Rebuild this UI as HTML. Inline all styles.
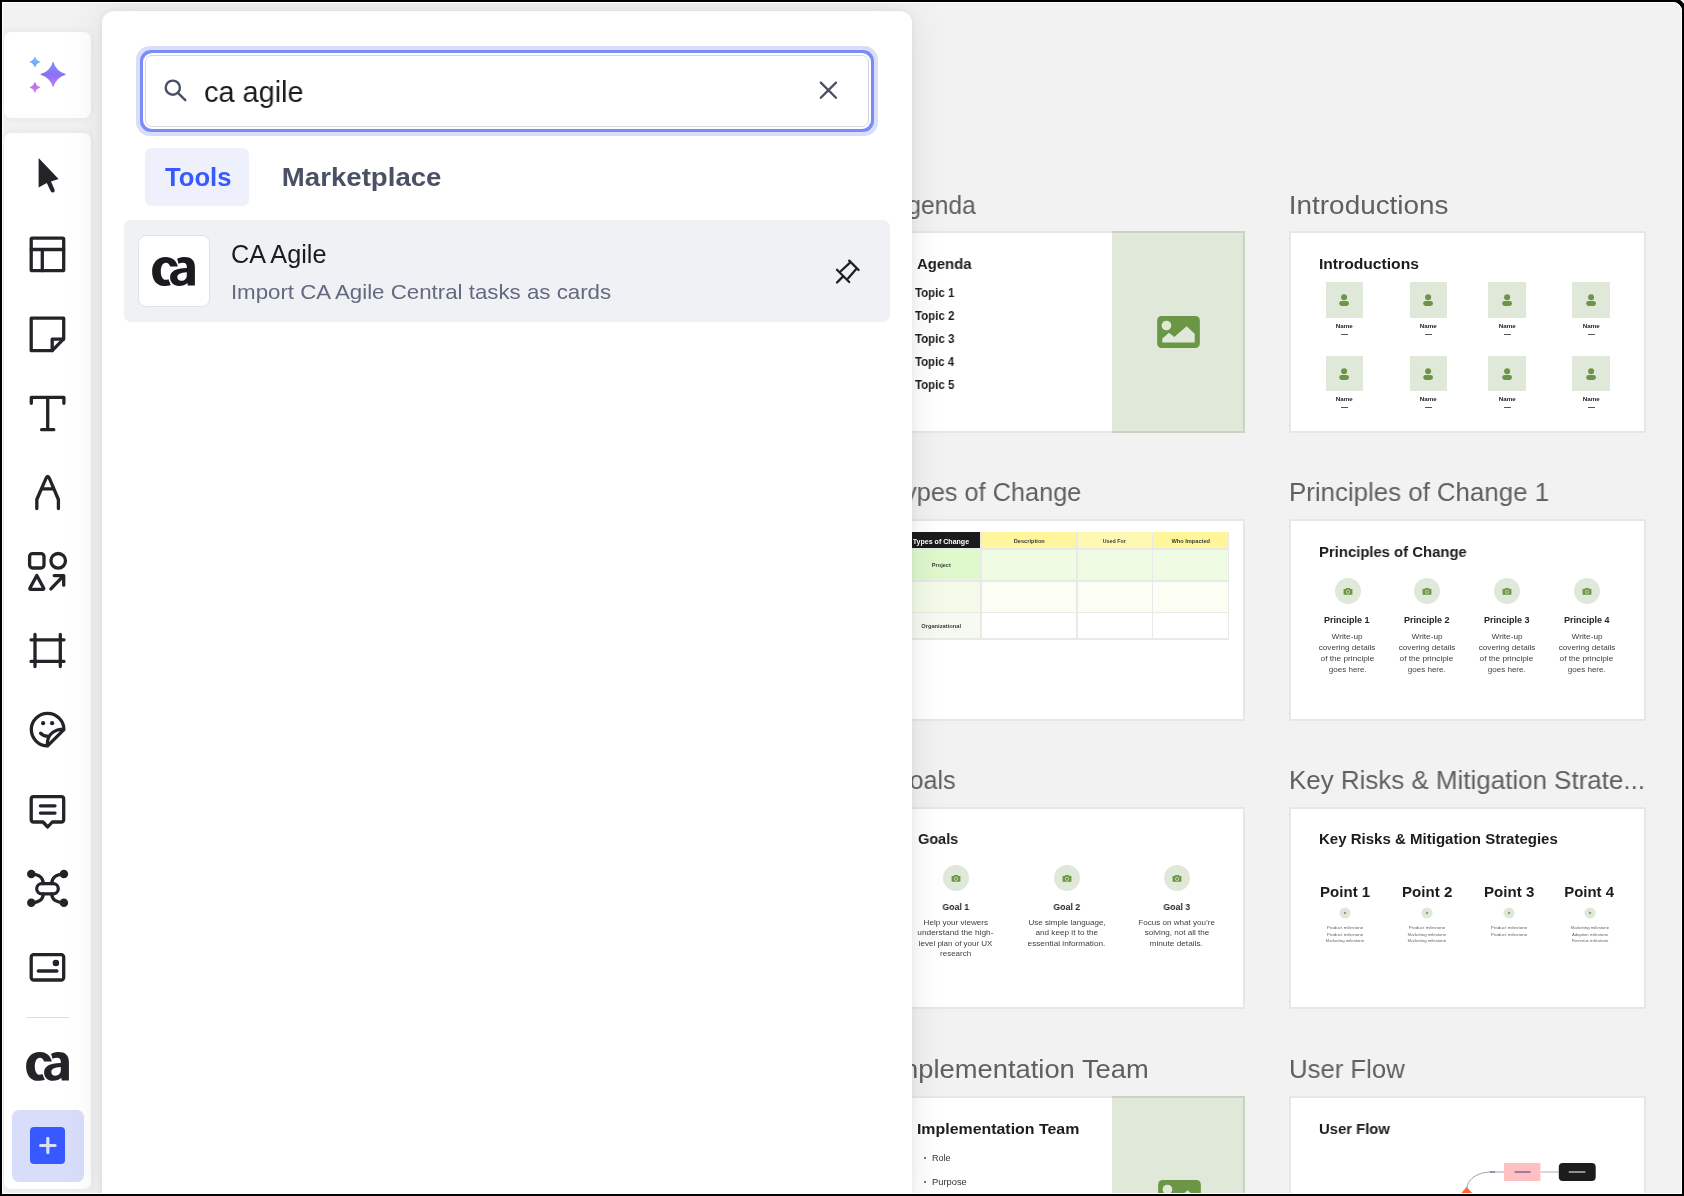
<!DOCTYPE html>
<html><head><meta charset="utf-8">
<style>
html,body{margin:0;padding:0;}
body{width:1684px;height:1196px;position:relative;overflow:hidden;background:#f2f2f2;font-family:"Liberation Sans",sans-serif;}
.t{position:absolute;white-space:nowrap;line-height:1;will-change:transform;}
.r{position:absolute;box-sizing:content-box;}
.sb{position:absolute;background:#fff;border-radius:7px;box-shadow:0 0 10px rgba(34,36,50,0.07);}
.panel{position:absolute;background:#fff;border-radius:12px;box-shadow:0 0 8px rgba(34,36,50,0.07),0 0 40px rgba(34,36,50,0.09);}
svg{position:absolute;overflow:visible;}
#inner{position:absolute;left:2px;top:2px;width:1678px;height:1190px;border:1px solid #fff;border-top-right-radius:9px;box-shadow:0 0 0 4px #000;}
</style></head><body>
<div id="canvas">
<div class="t" style="left:890.73px;top:191.69px;font-size:26px;font-weight:400;color:#606060;transform:scaleX(0.9449);transform-origin:0.07px 0;">Agenda</div>
<div class="t" style="left:1288.50px;top:191.69px;font-size:26px;font-weight:400;color:#606060;transform:scaleX(1.0726);transform-origin:2.40px 0;">Introductions</div>
<div class="t" style="left:890.21px;top:478.99px;font-size:26px;font-weight:400;color:#606060;transform:scaleX(0.9730);transform-origin:0.58px 0;">Types of Change</div>
<div class="t" style="left:1288.76px;top:478.99px;font-size:26px;font-weight:400;color:#606060;transform:scaleX(0.9939);transform-origin:2.15px 0;">Principles of Change 1</div>
<div class="t" style="left:889.50px;top:766.59px;font-size:26px;font-weight:400;color:#606060;transform:scaleX(0.9633);transform-origin:1.30px 0;">Goals</div>
<div class="t" style="left:1288.76px;top:766.59px;font-size:26px;font-weight:400;color:#606060;transform:scaleX(0.9974);transform-origin:2.15px 0;">Key Risks &amp; Mitigation Strate...</div>
<div class="t" style="left:888.39px;top:1055.99px;font-size:26px;font-weight:400;color:#606060;transform:scaleX(1.0516);transform-origin:2.40px 0;">Implementation Team</div>
<div class="t" style="left:1288.88px;top:1055.99px;font-size:26px;font-weight:400;color:#606060;transform:scaleX(0.9891);transform-origin:2.02px 0;">User Flow</div>
<div class="r" style="left:888px;top:231px;width:357px;height:201.5px;background:#fff;"></div>
<div class="r" style="left:888px;top:519px;width:357px;height:201.5px;background:#fff;"></div>
<div class="r" style="left:888px;top:807px;width:357px;height:201.5px;background:#fff;"></div>
<div class="r" style="left:888px;top:1096px;width:357px;height:201.5px;background:#fff;"></div>
<div class="r" style="left:1289px;top:231px;width:357px;height:201.5px;background:#fff;"></div>
<div class="r" style="left:1289px;top:519px;width:357px;height:201.5px;background:#fff;"></div>
<div class="r" style="left:1289px;top:807px;width:357px;height:201.5px;background:#fff;"></div>
<div class="r" style="left:1289px;top:1096px;width:357px;height:201.5px;background:#fff;"></div>
<div class="r" style="left:1112px;top:231px;width:132.5px;height:201.5px;background:#e0e8d9;"></div>
<div class="t" style="left:917.23px;top:256.40px;font-size:15px;font-weight:700;color:#1c1c1c;transform:scaleX(0.9906);transform-origin:0.38px 0;">Agenda</div>
<div class="t" style="left:915.17px;top:286.82px;font-size:12.5px;font-weight:700;color:#1c1c1c;transform:scaleX(0.9163);transform-origin:0.12px 0;">Topic 1</div>
<div class="t" style="left:915.17px;top:309.82px;font-size:12.5px;font-weight:700;color:#1c1c1c;transform:scaleX(0.9190);transform-origin:0.12px 0;">Topic 2</div>
<div class="t" style="left:915.17px;top:332.82px;font-size:12.5px;font-weight:700;color:#1c1c1c;transform:scaleX(0.9183);transform-origin:0.12px 0;">Topic 3</div>
<div class="t" style="left:915.17px;top:355.82px;font-size:12.5px;font-weight:700;color:#1c1c1c;transform:scaleX(0.9103);transform-origin:0.12px 0;">Topic 4</div>
<div class="t" style="left:915.17px;top:378.82px;font-size:12.5px;font-weight:700;color:#1c1c1c;transform:scaleX(0.9163);transform-origin:0.12px 0;">Topic 5</div>
<svg style="left:1156.9px;top:315.8px" width="43" height="32" viewBox="0 0 42.3 31.7"><rect x="0" y="0" width="42.3" height="31.7" rx="4.5" fill="#6b9646"/><path d="M5.1,22.3 L11.7,16.6 L17,20.9 L29.2,10.1 L37.2,17.5 L37.2,26.2 L5.1,26.2 Z" fill="#e0e8d9"/><circle cx="9.2" cy="9.4" r="4.8" fill="#e0e8d9"/></svg>
<div class="t" style="left:1318.89px;top:256.30px;font-size:15px;font-weight:700;color:#1c1c1c;transform:scaleX(1.0435);transform-origin:1.01px 0;">Introductions</div>
<div class="r" style="left:1325.5px;top:282px;width:37.6px;height:35.7px;background:#e0e8d9;"></div>
<svg style="left:1338.3px;top:293px" width="12" height="14" viewBox="0 0 12 14"><circle cx="6.1" cy="4.3" r="3" fill="#6b9646"/><rect x="1.2" y="8.1" width="9.8" height="4.9" rx="2.45" fill="#6b9646"/></svg>
<div class="t" style="left:1336.03px;top:322.62px;font-size:6px;font-weight:700;color:#222;transform:scaleX(1.0359);transform-origin:8.27px 0;">Name</div>
<div class="r" style="left:1340.8px;top:333.6px;width:7px;height:1px;background:#555;"></div>
<div class="r" style="left:1409.5px;top:282px;width:37.6px;height:35.7px;background:#e0e8d9;"></div>
<svg style="left:1422.3px;top:293px" width="12" height="14" viewBox="0 0 12 14"><circle cx="6.1" cy="4.3" r="3" fill="#6b9646"/><rect x="1.2" y="8.1" width="9.8" height="4.9" rx="2.45" fill="#6b9646"/></svg>
<div class="t" style="left:1420.03px;top:322.62px;font-size:6px;font-weight:700;color:#222;transform:scaleX(1.0359);transform-origin:8.27px 0;">Name</div>
<div class="r" style="left:1424.8px;top:333.6px;width:7px;height:1px;background:#555;"></div>
<div class="r" style="left:1488.3px;top:282px;width:37.6px;height:35.7px;background:#e0e8d9;"></div>
<svg style="left:1501.1px;top:293px" width="12" height="14" viewBox="0 0 12 14"><circle cx="6.1" cy="4.3" r="3" fill="#6b9646"/><rect x="1.2" y="8.1" width="9.8" height="4.9" rx="2.45" fill="#6b9646"/></svg>
<div class="t" style="left:1498.83px;top:322.62px;font-size:6px;font-weight:700;color:#222;transform:scaleX(1.0359);transform-origin:8.27px 0;">Name</div>
<div class="r" style="left:1503.6px;top:333.6px;width:7px;height:1px;background:#555;"></div>
<div class="r" style="left:1572.4px;top:282px;width:37.6px;height:35.7px;background:#e0e8d9;"></div>
<svg style="left:1585.2px;top:293px" width="12" height="14" viewBox="0 0 12 14"><circle cx="6.1" cy="4.3" r="3" fill="#6b9646"/><rect x="1.2" y="8.1" width="9.8" height="4.9" rx="2.45" fill="#6b9646"/></svg>
<div class="t" style="left:1582.93px;top:322.62px;font-size:6px;font-weight:700;color:#222;transform:scaleX(1.0359);transform-origin:8.27px 0;">Name</div>
<div class="r" style="left:1587.7px;top:333.6px;width:7px;height:1px;background:#555;"></div>
<div class="r" style="left:1325.5px;top:355.8px;width:37.6px;height:35.7px;background:#e0e8d9;"></div>
<svg style="left:1338.3px;top:366.8px" width="12" height="14" viewBox="0 0 12 14"><circle cx="6.1" cy="4.3" r="3" fill="#6b9646"/><rect x="1.2" y="8.1" width="9.8" height="4.9" rx="2.45" fill="#6b9646"/></svg>
<div class="t" style="left:1336.03px;top:396.42px;font-size:6px;font-weight:700;color:#222;transform:scaleX(1.0359);transform-origin:8.27px 0;">Name</div>
<div class="r" style="left:1340.8px;top:407.40000000000003px;width:7px;height:1px;background:#555;"></div>
<div class="r" style="left:1409.5px;top:355.8px;width:37.6px;height:35.7px;background:#e0e8d9;"></div>
<svg style="left:1422.3px;top:366.8px" width="12" height="14" viewBox="0 0 12 14"><circle cx="6.1" cy="4.3" r="3" fill="#6b9646"/><rect x="1.2" y="8.1" width="9.8" height="4.9" rx="2.45" fill="#6b9646"/></svg>
<div class="t" style="left:1420.03px;top:396.42px;font-size:6px;font-weight:700;color:#222;transform:scaleX(1.0359);transform-origin:8.27px 0;">Name</div>
<div class="r" style="left:1424.8px;top:407.40000000000003px;width:7px;height:1px;background:#555;"></div>
<div class="r" style="left:1488.3px;top:355.8px;width:37.6px;height:35.7px;background:#e0e8d9;"></div>
<svg style="left:1501.1px;top:366.8px" width="12" height="14" viewBox="0 0 12 14"><circle cx="6.1" cy="4.3" r="3" fill="#6b9646"/><rect x="1.2" y="8.1" width="9.8" height="4.9" rx="2.45" fill="#6b9646"/></svg>
<div class="t" style="left:1498.83px;top:396.42px;font-size:6px;font-weight:700;color:#222;transform:scaleX(1.0359);transform-origin:8.27px 0;">Name</div>
<div class="r" style="left:1503.6px;top:407.40000000000003px;width:7px;height:1px;background:#555;"></div>
<div class="r" style="left:1572.4px;top:355.8px;width:37.6px;height:35.7px;background:#e0e8d9;"></div>
<svg style="left:1585.2px;top:366.8px" width="12" height="14" viewBox="0 0 12 14"><circle cx="6.1" cy="4.3" r="3" fill="#6b9646"/><rect x="1.2" y="8.1" width="9.8" height="4.9" rx="2.45" fill="#6b9646"/></svg>
<div class="t" style="left:1582.93px;top:396.42px;font-size:6px;font-weight:700;color:#222;transform:scaleX(1.0359);transform-origin:8.27px 0;">Name</div>
<div class="r" style="left:1587.7px;top:407.40000000000003px;width:7px;height:1px;background:#555;"></div>
<div class="r" style="left:902px;top:531.5px;width:326.79999999999995px;height:108px;background:#e9e9e9;"></div>
<div class="r" style="left:902px;top:532.2px;width:78px;height:15.7px;background:#1b1b1b;"></div>
<div class="r" style="left:981.7px;top:532.2px;width:94.3px;height:15.7px;background:#fff59d;"></div>
<div class="r" style="left:1077.6px;top:532.2px;width:74.1px;height:15.7px;background:#fef9b2;"></div>
<div class="r" style="left:1153.3px;top:532.2px;width:74.3px;height:15.7px;background:#fff59a;"></div>
<div class="r" style="left:902px;top:549.6px;width:78px;height:30.1px;background:#dff9cc;"></div>
<div class="r" style="left:981.7px;top:549.6px;width:94.3px;height:30.1px;background:#effbe3;"></div>
<div class="r" style="left:1077.6px;top:549.6px;width:74.1px;height:30.1px;background:#effbe3;"></div>
<div class="r" style="left:1153.3px;top:549.6px;width:74.3px;height:30.1px;background:#effbe3;"></div>
<div class="r" style="left:902px;top:581.5px;width:78px;height:30.3px;background:#f3fbe8;"></div>
<div class="r" style="left:981.7px;top:581.5px;width:94.3px;height:30.3px;background:#fcfdf3;"></div>
<div class="r" style="left:1077.6px;top:581.5px;width:74.1px;height:30.3px;background:#fcfdf3;"></div>
<div class="r" style="left:1153.3px;top:581.5px;width:74.3px;height:30.3px;background:#fcfdf3;"></div>
<div class="r" style="left:902px;top:613.3px;width:78px;height:24.5px;background:#f5fbf1;"></div>
<div class="r" style="left:981.7px;top:613.3px;width:94.3px;height:24.5px;background:#ffffff;"></div>
<div class="r" style="left:1077.6px;top:613.3px;width:74.1px;height:24.5px;background:#ffffff;"></div>
<div class="r" style="left:1153.3px;top:613.3px;width:74.3px;height:24.5px;background:#ffffff;"></div>
<div class="t" style="left:913.14px;top:538.07px;font-size:7px;font-weight:700;color:#fff;transform:scaleX(1.0076);transform-origin:27.86px 0;">Types of Change</div>
<div class="t" style="left:1014.53px;top:539.00px;font-size:5.2px;font-weight:700;color:#3c3c30;transform:scaleX(1.0882);transform-origin:14.32px 0;">Description</div>
<div class="t" style="left:1103.26px;top:539.00px;font-size:5.2px;font-weight:700;color:#3c3c30;transform:scaleX(1.0202);transform-origin:11.39px 0;">Used For</div>
<div class="t" style="left:1172.85px;top:539.00px;font-size:5.2px;font-weight:700;color:#3c3c30;transform:scaleX(1.0912);transform-origin:17.60px 0;">Who Impacted</div>
<div class="t" style="left:931.83px;top:562.74px;font-size:5.5px;font-weight:700;color:#3a3a3a;transform:scaleX(1.0162);transform-origin:9.47px 0;">Project</div>
<div class="t" style="left:921.88px;top:623.94px;font-size:5.5px;font-weight:700;color:#3a3a3a;transform:scaleX(1.0428);transform-origin:19.02px 0;">Organizational</div>
<div class="t" style="left:1318.89px;top:544.40px;font-size:15px;font-weight:700;color:#1c1c1c;transform:scaleX(0.9900);transform-origin:1.01px 0;">Principles of Change</div>
<svg style="left:1334.8000000000002px;top:577.6px" width="26" height="26" viewBox="0 0 26 26"><circle cx="13" cy="13" r="13" fill="#e0e8d9"/><path d="M8.6,11 h2 l0.8,-1 h3.2 l0.8,1 h2 v5.8 h-8.8 z" fill="#6b9646"/><circle cx="13" cy="13.8" r="1.7" fill="none" stroke="#c9dbb9" stroke-width="0.9"/></svg>
<div class="t" style="left:1324.46px;top:615.58px;font-size:9px;font-weight:700;color:#222;">Principle 1</div>
<div class="t" style="left:1333.43px;top:633.15px;font-size:7.5px;font-weight:400;color:#3f3f3f;transform:scaleX(1.1018);transform-origin:13.97px 0;">Write-up</div>
<div class="t" style="left:1321.32px;top:644.05px;font-size:7.5px;font-weight:400;color:#3f3f3f;transform:scaleX(1.0869);transform-origin:26.08px 0;">covering details</div>
<div class="t" style="left:1323.02px;top:654.95px;font-size:7.5px;font-weight:400;color:#3f3f3f;transform:scaleX(1.1012);transform-origin:24.38px 0;">of the principle</div>
<div class="t" style="left:1329.86px;top:665.85px;font-size:7.5px;font-weight:400;color:#3f3f3f;transform:scaleX(1.0742);transform-origin:17.54px 0;">goes here.</div>
<svg style="left:1414.2px;top:577.6px" width="26" height="26" viewBox="0 0 26 26"><circle cx="13" cy="13" r="13" fill="#e0e8d9"/><path d="M8.6,11 h2 l0.8,-1 h3.2 l0.8,1 h2 v5.8 h-8.8 z" fill="#6b9646"/><circle cx="13" cy="13.8" r="1.7" fill="none" stroke="#c9dbb9" stroke-width="0.9"/></svg>
<div class="t" style="left:1403.91px;top:615.58px;font-size:9px;font-weight:700;color:#222;transform:scaleX(1.0029);transform-origin:22.89px 0;">Principle 2</div>
<div class="t" style="left:1412.83px;top:633.15px;font-size:7.5px;font-weight:400;color:#3f3f3f;transform:scaleX(1.1018);transform-origin:13.97px 0;">Write-up</div>
<div class="t" style="left:1400.72px;top:644.05px;font-size:7.5px;font-weight:400;color:#3f3f3f;transform:scaleX(1.0869);transform-origin:26.08px 0;">covering details</div>
<div class="t" style="left:1402.42px;top:654.95px;font-size:7.5px;font-weight:400;color:#3f3f3f;transform:scaleX(1.1012);transform-origin:24.38px 0;">of the principle</div>
<div class="t" style="left:1409.26px;top:665.85px;font-size:7.5px;font-weight:400;color:#3f3f3f;transform:scaleX(1.0742);transform-origin:17.54px 0;">goes here.</div>
<svg style="left:1494.1000000000001px;top:577.6px" width="26" height="26" viewBox="0 0 26 26"><circle cx="13" cy="13" r="13" fill="#e0e8d9"/><path d="M8.6,11 h2 l0.8,-1 h3.2 l0.8,1 h2 v5.8 h-8.8 z" fill="#6b9646"/><circle cx="13" cy="13.8" r="1.7" fill="none" stroke="#c9dbb9" stroke-width="0.9"/></svg>
<div class="t" style="left:1483.80px;top:615.58px;font-size:9px;font-weight:700;color:#222;transform:scaleX(1.0024);transform-origin:22.91px 0;">Principle 3</div>
<div class="t" style="left:1492.73px;top:633.15px;font-size:7.5px;font-weight:400;color:#3f3f3f;transform:scaleX(1.1018);transform-origin:13.97px 0;">Write-up</div>
<div class="t" style="left:1480.62px;top:644.05px;font-size:7.5px;font-weight:400;color:#3f3f3f;transform:scaleX(1.0869);transform-origin:26.08px 0;">covering details</div>
<div class="t" style="left:1482.32px;top:654.95px;font-size:7.5px;font-weight:400;color:#3f3f3f;transform:scaleX(1.1012);transform-origin:24.38px 0;">of the principle</div>
<div class="t" style="left:1489.16px;top:665.85px;font-size:7.5px;font-weight:400;color:#3f3f3f;transform:scaleX(1.0742);transform-origin:17.54px 0;">goes here.</div>
<svg style="left:1574.0px;top:577.6px" width="26" height="26" viewBox="0 0 26 26"><circle cx="13" cy="13" r="13" fill="#e0e8d9"/><path d="M8.6,11 h2 l0.8,-1 h3.2 l0.8,1 h2 v5.8 h-8.8 z" fill="#6b9646"/><circle cx="13" cy="13.8" r="1.7" fill="none" stroke="#c9dbb9" stroke-width="0.9"/></svg>
<div class="t" style="left:1563.56px;top:615.58px;font-size:9px;font-weight:700;color:#222;transform:scaleX(0.9963);transform-origin:23.04px 0;">Principle 4</div>
<div class="t" style="left:1572.63px;top:633.15px;font-size:7.5px;font-weight:400;color:#3f3f3f;transform:scaleX(1.1018);transform-origin:13.97px 0;">Write-up</div>
<div class="t" style="left:1560.52px;top:644.05px;font-size:7.5px;font-weight:400;color:#3f3f3f;transform:scaleX(1.0869);transform-origin:26.08px 0;">covering details</div>
<div class="t" style="left:1562.22px;top:654.95px;font-size:7.5px;font-weight:400;color:#3f3f3f;transform:scaleX(1.1012);transform-origin:24.38px 0;">of the principle</div>
<div class="t" style="left:1569.06px;top:665.85px;font-size:7.5px;font-weight:400;color:#3f3f3f;transform:scaleX(1.0742);transform-origin:17.54px 0;">goes here.</div>
<div class="t" style="left:917.90px;top:831.00px;font-size:15px;font-weight:700;color:#1c1c1c;transform:scaleX(0.9639);transform-origin:0.60px 0;">Goals</div>
<svg style="left:943.1px;top:865.1px" width="26" height="26" viewBox="0 0 26 26"><circle cx="13" cy="13" r="13" fill="#e0e8d9"/><path d="M8.6,11 h2 l0.8,-1 h3.2 l0.8,1 h2 v5.8 h-8.8 z" fill="#6b9646"/><circle cx="13" cy="13.8" r="1.7" fill="none" stroke="#c9dbb9" stroke-width="0.9"/></svg>
<div class="t" style="left:941.90px;top:903.08px;font-size:9px;font-weight:700;color:#222;transform:scaleX(0.9670);transform-origin:13.80px 0;">Goal 1</div>
<div class="t" style="left:925.72px;top:918.55px;font-size:7.5px;font-weight:400;color:#3f3f3f;transform:scaleX(1.0813);transform-origin:29.98px 0;">Help your viewers</div>
<div class="t" style="left:921.22px;top:929.15px;font-size:7.5px;font-weight:400;color:#3f3f3f;transform:scaleX(1.1061);transform-origin:34.48px 0;">understand the high-</div>
<div class="t" style="left:920.93px;top:939.75px;font-size:7.5px;font-weight:400;color:#3f3f3f;transform:scaleX(1.0652);transform-origin:34.77px 0;">level plan of your UX</div>
<div class="t" style="left:941.10px;top:950.35px;font-size:7.5px;font-weight:400;color:#3f3f3f;transform:scaleX(1.0631);transform-origin:14.60px 0;">research</div>
<svg style="left:1054.0px;top:865.1px" width="26" height="26" viewBox="0 0 26 26"><circle cx="13" cy="13" r="13" fill="#e0e8d9"/><path d="M8.6,11 h2 l0.8,-1 h3.2 l0.8,1 h2 v5.8 h-8.8 z" fill="#6b9646"/><circle cx="13" cy="13.8" r="1.7" fill="none" stroke="#c9dbb9" stroke-width="0.9"/></svg>
<div class="t" style="left:1052.84px;top:903.08px;font-size:9px;font-weight:700;color:#222;transform:scaleX(0.9702);transform-origin:13.76px 0;">Goal 2</div>
<div class="t" style="left:1030.58px;top:918.55px;font-size:7.5px;font-weight:400;color:#3f3f3f;transform:scaleX(1.0723);transform-origin:36.02px 0;">Use simple language,</div>
<div class="t" style="left:1037.83px;top:929.15px;font-size:7.5px;font-weight:400;color:#3f3f3f;transform:scaleX(1.0895);transform-origin:28.77px 0;">and keep it to the</div>
<div class="t" style="left:1031.34px;top:939.75px;font-size:7.5px;font-weight:400;color:#3f3f3f;transform:scaleX(1.0976);transform-origin:35.26px 0;">essential information.</div>
<svg style="left:1163.9px;top:865.1px" width="26" height="26" viewBox="0 0 26 26"><circle cx="13" cy="13" r="13" fill="#e0e8d9"/><path d="M8.6,11 h2 l0.8,-1 h3.2 l0.8,1 h2 v5.8 h-8.8 z" fill="#6b9646"/><circle cx="13" cy="13.8" r="1.7" fill="none" stroke="#c9dbb9" stroke-width="0.9"/></svg>
<div class="t" style="left:1162.73px;top:903.08px;font-size:9px;font-weight:700;color:#222;transform:scaleX(0.9694);transform-origin:13.77px 0;">Goal 3</div>
<div class="t" style="left:1140.71px;top:918.55px;font-size:7.5px;font-weight:400;color:#3f3f3f;transform:scaleX(1.0746);transform-origin:35.79px 0;">Focus on what you’re</div>
<div class="t" style="left:1146.54px;top:929.15px;font-size:7.5px;font-weight:400;color:#3f3f3f;transform:scaleX(1.0754);transform-origin:29.96px 0;">solving, not all the</div>
<div class="t" style="left:1152.41px;top:939.75px;font-size:7.5px;font-weight:400;color:#3f3f3f;transform:scaleX(1.1023);transform-origin:24.09px 0;">minute details.</div>
<div class="t" style="left:1318.89px;top:831.20px;font-size:15px;font-weight:700;color:#1c1c1c;transform:scaleX(1.0018);transform-origin:1.01px 0;">Key Risks &amp; Mitigation Strategies</div>
<div class="t" style="left:1320.55px;top:884.53px;font-size:14.5px;font-weight:700;color:#1c1c1c;transform:scaleX(1.0374);transform-origin:24.45px 0;">Point 1</div>
<svg style="left:1339px;top:906.7px" width="12" height="12"><circle cx="6" cy="6" r="5.6" fill="#e0e8d9"/><path d="M4.9,5.1 L7.1,6 L4.9,6.9" fill="none" stroke="#6b9646" stroke-width="0.9"/></svg>
<div class="t" style="left:1328.91px;top:926.41px;font-size:4px;font-weight:400;color:#666;transform:scaleX(1.1425);transform-origin:16.09px 0;">Product milestone</div>
<div class="t" style="left:1328.91px;top:932.81px;font-size:4px;font-weight:400;color:#666;transform:scaleX(1.1425);transform-origin:16.09px 0;">Product milestone</div>
<div class="t" style="left:1327.03px;top:939.21px;font-size:4px;font-weight:400;color:#666;transform:scaleX(1.0768);transform-origin:17.97px 0;">Marketing milestone</div>
<div class="t" style="left:1402.92px;top:884.53px;font-size:14.5px;font-weight:700;color:#1c1c1c;transform:scaleX(1.0406);transform-origin:24.38px 0;">Point 2</div>
<svg style="left:1421.3px;top:906.7px" width="12" height="12"><circle cx="6" cy="6" r="5.6" fill="#e0e8d9"/><path d="M4.9,5.1 L7.1,6 L4.9,6.9" fill="none" stroke="#6b9646" stroke-width="0.9"/></svg>
<div class="t" style="left:1411.21px;top:926.41px;font-size:4px;font-weight:400;color:#666;transform:scaleX(1.1425);transform-origin:16.09px 0;">Product milestone</div>
<div class="t" style="left:1409.33px;top:932.81px;font-size:4px;font-weight:400;color:#666;transform:scaleX(1.0768);transform-origin:17.97px 0;">Marketing milestone</div>
<div class="t" style="left:1409.33px;top:939.21px;font-size:4px;font-weight:400;color:#666;transform:scaleX(1.0768);transform-origin:17.97px 0;">Marketing milestone</div>
<div class="t" style="left:1484.50px;top:884.53px;font-size:14.5px;font-weight:700;color:#1c1c1c;transform:scaleX(1.0398);transform-origin:24.40px 0;">Point 3</div>
<svg style="left:1502.9px;top:906.7px" width="12" height="12"><circle cx="6" cy="6" r="5.6" fill="#e0e8d9"/><path d="M4.9,5.1 L7.1,6 L4.9,6.9" fill="none" stroke="#6b9646" stroke-width="0.9"/></svg>
<div class="t" style="left:1492.82px;top:926.41px;font-size:4px;font-weight:400;color:#666;transform:scaleX(1.1425);transform-origin:16.09px 0;">Product milestone</div>
<div class="t" style="left:1492.82px;top:932.81px;font-size:4px;font-weight:400;color:#666;transform:scaleX(1.1425);transform-origin:16.09px 0;">Product milestone</div>
<div class="t" style="left:1565.39px;top:884.53px;font-size:14.5px;font-weight:700;color:#1c1c1c;transform:scaleX(1.0303);transform-origin:24.61px 0;">Point 4</div>
<svg style="left:1584px;top:906.7px" width="12" height="12"><circle cx="6" cy="6" r="5.6" fill="#e0e8d9"/><path d="M4.9,5.1 L7.1,6 L4.9,6.9" fill="none" stroke="#6b9646" stroke-width="0.9"/></svg>
<div class="t" style="left:1572.03px;top:926.41px;font-size:4px;font-weight:400;color:#666;transform:scaleX(1.0768);transform-origin:17.97px 0;">Marketing milestone</div>
<div class="t" style="left:1573.07px;top:932.81px;font-size:4px;font-weight:400;color:#666;transform:scaleX(1.0638);transform-origin:16.93px 0;">Adoption milestone</div>
<div class="t" style="left:1572.80px;top:939.21px;font-size:4px;font-weight:400;color:#666;transform:scaleX(1.0670);transform-origin:17.20px 0;">Revenue milestone</div>
<div class="r" style="left:1112px;top:1096px;width:132.5px;height:110px;background:#e0e8d9;"></div>
<div class="t" style="left:917.19px;top:1120.90px;font-size:15px;font-weight:700;color:#1c1c1c;transform:scaleX(1.0604);transform-origin:1.01px 0;">Implementation Team</div>
<div class="r" style="left:924.3px;top:1157.3px;width:2px;height:2px;background:#444;border-radius:1px;"></div>
<div class="t" style="left:932.36px;top:1154.18px;font-size:9px;font-weight:400;color:#333;transform:scaleX(1.0075);transform-origin:0.74px 0;">Role</div>
<div class="r" style="left:924.3px;top:1181.3px;width:2px;height:2px;background:#444;border-radius:1px;"></div>
<div class="t" style="left:932.36px;top:1178.18px;font-size:9px;font-weight:400;color:#333;transform:scaleX(1.0378);transform-origin:0.74px 0;">Purpose</div>
<svg style="left:1157.6px;top:1180px" width="43" height="32" viewBox="0 0 42.3 31.7"><rect x="0" y="0" width="42.3" height="31.7" rx="4.5" fill="#6b9646"/><path d="M5.1,22.3 L11.7,16.6 L17,20.9 L29.2,10.1 L37.2,17.5 L37.2,26.2 L5.1,26.2 Z" fill="#e0e8d9"/><circle cx="9.2" cy="9.4" r="4.8" fill="#e0e8d9"/></svg>
<div class="t" style="left:1319.00px;top:1121.20px;font-size:15px;font-weight:700;color:#1c1c1c;transform:scaleX(0.9887);transform-origin:0.90px 0;">User Flow</div>
<svg style="left:0;top:0" width="1684" height="1196"><path d="M1466.7,1190 C1466.7,1180 1476,1172 1492,1172 L1504,1172" fill="none" stroke="#8a8a8a" stroke-width="0.8"/><line x1="1540.4" y1="1172" x2="1558.8" y2="1172" stroke="#9a9a9a" stroke-width="0.8"/><rect x="1504" y="1163" width="36.4" height="18" fill="#ffbfc3"/><line x1="1514.6" y1="1172" x2="1530.6" y2="1172" stroke="#6b5b8a" stroke-width="1.3"/><rect x="1558.8" y="1163" width="36.9" height="18" rx="4" fill="#1c1c1c"/><line x1="1568.7" y1="1172" x2="1585.4" y2="1172" stroke="#cfcfcf" stroke-width="1.3"/><path d="M1466.7,1187 L1473,1194 L1460.4,1194 Z" fill="#ff6633"/><line x1="1490" y1="1172" x2="1495" y2="1172" stroke="#7070b0" stroke-width="1.3"/></svg>
<div class="r" style="left:888px;top:231px;width:353px;height:197.5px;border:2px solid rgba(0,0,0,0.095);"></div>
<div class="r" style="left:888px;top:519px;width:353px;height:197.5px;border:2px solid rgba(0,0,0,0.095);"></div>
<div class="r" style="left:888px;top:807px;width:353px;height:197.5px;border:2px solid rgba(0,0,0,0.095);"></div>
<div class="r" style="left:888px;top:1096px;width:353px;height:197.5px;border:2px solid rgba(0,0,0,0.095);"></div>
<div class="r" style="left:1289px;top:231px;width:353px;height:197.5px;border:2px solid rgba(0,0,0,0.095);"></div>
<div class="r" style="left:1289px;top:519px;width:353px;height:197.5px;border:2px solid rgba(0,0,0,0.095);"></div>
<div class="r" style="left:1289px;top:807px;width:353px;height:197.5px;border:2px solid rgba(0,0,0,0.095);"></div>
<div class="r" style="left:1289px;top:1096px;width:353px;height:197.5px;border:2px solid rgba(0,0,0,0.095);"></div>
</div>
<div id="sidebar">
<div class="sb" style="left:4px;top:32px;width:87px;height:86px;"></div>
<div class="sb" style="left:4px;top:133px;width:87px;height:1055.5px;"></div>
<svg style="left:0;top:0" width="100" height="100"><defs>
<linearGradient id="gs1" x1="0" y1="56.5" x2="0" y2="67.2" gradientUnits="userSpaceOnUse"><stop offset="0" stop-color="#82c0ff"/><stop offset="1" stop-color="#6c9cfa"/></linearGradient>
<linearGradient id="gs2" x1="0" y1="62" x2="0" y2="87" gradientUnits="userSpaceOnUse"><stop offset="0" stop-color="#7c97fc"/><stop offset="0.5" stop-color="#8a70f6"/><stop offset="1" stop-color="#c77cf0"/></linearGradient>
<linearGradient id="gs3" x1="0" y1="82" x2="0" y2="93" gradientUnits="userSpaceOnUse"><stop offset="0" stop-color="#a76ff3"/><stop offset="1" stop-color="#d77fec"/></linearGradient></defs>
<path d="M53.1,62.50000000000001 C54.17,67.86 59.64,73.33 65.0,74.4 C59.64,75.47 54.17,80.95 53.1,86.30000000000001 C52.03,80.95 46.56,75.47 41.2,74.4 C46.56,73.33 52.03,67.86 53.1,62.50000000000001 Z" fill="url(#gs2)" stroke="url(#gs2)" stroke-width="1.2" stroke-linejoin="round"/>
<path d="M34.9,57.1 C35.33,59.26 37.54,61.47 39.699999999999996,61.9 C37.54,62.33 35.33,64.54 34.9,66.7 C34.47,64.54 32.26,62.33 30.099999999999998,61.9 C32.26,61.47 34.47,59.26 34.9,57.1 Z" fill="url(#gs1)" stroke="url(#gs1)" stroke-width="1" stroke-linejoin="round"/>
<path d="M34.9,82.60000000000001 C35.33,84.76 37.54,86.97 39.699999999999996,87.4 C37.54,87.83 35.33,90.04 34.9,92.2 C34.47,90.04 32.26,87.83 30.099999999999998,87.4 C32.26,86.97 34.47,84.76 34.9,82.60000000000001 Z" fill="url(#gs3)" stroke="url(#gs3)" stroke-width="1" stroke-linejoin="round"/>
</svg>
<svg style="left:0;top:0" width="100" height="1196" fill="none" stroke="#222428" stroke-width="3.3" stroke-linecap="round" stroke-linejoin="round">
<path d="M38.6,158.1 L58.6,178.9 L51,181.6 L54.6,189.7 Q55.3,191.8 53.3,192.4 Q51.4,193 50.6,191.1 L46.8,183.1 L38.6,187.6 Z" fill="#222428" stroke="none"/>
<rect x="31.2" y="238.2" width="32.5" height="32.5" rx="1"/><path d="M31.2,249.5 H63.7 M42.3,249.5 V270.7"/>
<path d="M31.2,318.2 H63.7 V338.8 L52.2,350.7 H31.2 Z"/><path d="M63.5,339.2 H52.2 V350.5"/>
<path d="M31.3,403.3 V397.3 H63.9 V403.3 M47.7,397.3 V429.7 M41.6,429.7 H53.8"/>
<path d="M36.8,508.5 V499.5 L46.1,478.2 Q47.7,474.8 49.3,478.2 L58.4,499.5 V508.5 M42,488.8 H53.5"/>
<rect x="29.6" y="553.6" width="14.4" height="14.4" rx="3"/><circle cx="58.2" cy="560.8" r="7.3"/><path d="M36.8,575.5 L30,588 Q29.3,589.4 31,589.4 H42.6 Q44.3,589.4 43.6,588 Z"/><path d="M50.9,588.9 L63.2,576.2 M54.2,575.6 H63.7 V585.2"/>
<path d="M35,634.5 V666.5 M60.3,634.5 V666.5 M31,639.8 H64 M31,661.4 H64"/>
<path d="M47.6,745.9 A16.3,16.3 0 1 1 63.9,729.6 L47.6,745.9 M63.7,729.2 C56,729.5 47.3,733 47.3,744.5"/><circle cx="43.1" cy="723.2" r="2.1" fill="#222428" stroke="none"/><circle cx="52.1" cy="723.2" r="2.1" fill="#222428" stroke="none"/><path d="M40.6,733.2 Q43.8,736.3 47.4,736.2"/>
<path d="M33.7,796.7 H61.2 Q63.7,796.7 63.7,799.2 V819.5 Q63.7,822 61.2,822 H52.3 L47.7,827 L43,822 H33.7 Q31.2,822 31.2,819.5 V799.2 Q31.2,796.7 33.7,796.7 Z"/><path d="M40.4,805.8 H55 M40.4,813.1 H55"/>
<rect x="36.7" y="883.7" width="21.6" height="10.1" rx="5.05" stroke-width="3.2"/><path d="M31.3,874.1 C38.5,874.1 43.3,877.2 43.3,883.7 M63.9,874.1 C56.7,874.1 51.7,877.2 51.7,883.7 M31.3,902.7 C38.5,902.7 43.3,899.8 43.3,893.8 M63.9,902.7 C56.7,902.7 51.7,899.8 51.7,893.8"/><circle cx="31.3" cy="874.1" r="2.6" fill="#222428"/><circle cx="63.9" cy="874.1" r="2.6" fill="#222428"/><circle cx="31.3" cy="902.7" r="2.6" fill="#222428"/><circle cx="63.9" cy="902.7" r="2.6" fill="#222428"/>
<rect x="31.2" y="954.7" width="32.5" height="25.3" rx="2.5"/><circle cx="55.9" cy="963.1" r="1.6" fill="#222428"/><path d="M38.3,971 H56.9"/>
</svg>
<div class="r" style="left:25.8px;top:1017px;width:43.1px;height:1px;background:#dcdee5;"></div>
<svg style="left:0;top:0" width="1684" height="1196"><g transform="translate(-126.00,794.90)" fill="#222428"><path d="M177.8,266.5 L170.1,266.5 C169.4,264.2 168,262.8 165.8,262.8 C162.6,262.8 160.8,266.3 160.8,271.5 C160.8,276.6 162.8,279.8 165.6,279.8 C166.6,279.8 167.6,279.6 168.4,279.2 L170.8,284.9 C169,285.6 166.6,285.9 163.8,285.9 C156.6,285.9 152.1,280 152.1,271.5 C152.1,263.1 157.4,257.1 165.8,257.1 C172,257.1 176.6,260.5 177.8,266.5 Z"/><path fill-rule="evenodd" stroke="#fff" stroke-width="1.1" paint-order="stroke" d="M177.1,258.8 C179.5,257.7 181.8,257.1 184.6,257.1 C191,257.1 194.9,260.2 194.9,267 L194.9,285.5 L187.8,285.5 L187.3,282.9 C185.5,284.9 182.5,285.9 178.9,285.9 C173.6,285.9 170.1,282.5 170.1,277.5 C170.1,271.4 175.3,268.3 186.8,268 L186.8,266.6 C186.8,264.1 185.5,262.8 183.1,262.8 C181.4,262.8 179.9,263.2 178.5,263.8 Z M186.8,272.2 C180.2,272.5 177.3,274.2 177.3,277.1 C177.3,279.4 178.8,280.8 181.3,280.8 C184.6,280.8 186.8,278.5 186.8,275.4 Z"/></g></svg>
<div class="r" style="left:12px;top:1110px;width:72px;height:72px;background:#d8ddfa;border-radius:7px;"></div>
<div class="r" style="left:29.7px;top:1127.4px;width:35.6px;height:36.2px;background:#3859ff;border-radius:4px;"></div>
<svg style="left:0;top:0" width="100" height="1196"><path d="M40.6,1145.5 H55.1 M47.85,1138.3 V1152.6" stroke="#d8ddfa" stroke-width="3.2" stroke-linecap="round"/></svg>
</div>
<div id="panel">
<div class="panel" style="left:102px;top:11px;width:810px;height:1200px;"></div>
<div class="r" style="left:136px;top:46px;width:742px;height:90px;border-radius:14px;background:#d9defb;"></div>
<div class="r" style="left:140px;top:50px;width:734px;height:82px;border-radius:11px;background:#7b8cfa;"></div>
<div class="r" style="left:143px;top:53px;width:728px;height:76px;border-radius:9px;background:#fff;"></div>
<div class="r" style="left:145px;top:55px;width:722px;height:70px;border-radius:7px;background:#fff;border:1px solid #d5d7de;"></div>
<svg style="left:0;top:0" width="1000" height="200" fill="none" stroke="#4a4f63" stroke-width="2.4" stroke-linecap="round"><circle cx="172.8" cy="87.7" r="7.1"/><path d="M178.2,93.1 L185.3,100.2"/><path d="M820.8,82.6 L836,97.8 M836,82.6 L820.8,97.8" stroke-width="2.3"/></svg>
<div class="t" style="left:203.72px;top:76.51px;font-size:30px;font-weight:400;color:#1c1c1c;transform:scaleX(0.9623);transform-origin:1.28px 0;">ca agile</div>
<div class="r" style="left:145px;top:148px;width:104px;height:58px;background:#eef1fb;border-radius:6px;"></div>
<div class="t" style="left:164.65px;top:164.81px;font-size:25.5px;font-weight:700;color:#3859ff;transform:scaleX(1.0051);transform-origin:0.26px 0;">Tools</div>
<div class="t" style="left:282.08px;top:164.81px;font-size:25.5px;font-weight:700;color:#4b5165;transform:scaleX(1.0826);transform-origin:1.72px 0;">Marketplace</div>
<div class="r" style="left:124px;top:220px;width:766px;height:102px;background:#f0f1f5;border-radius:7px;"></div>
<div class="r" style="left:138px;top:235px;width:70px;height:70px;border-radius:8px;background:#fff;border:1px solid #dfe1e8;"></div>
<svg style="left:0;top:0" width="1684" height="1196"><g transform="translate(0.00,0.00)" fill="#1a1b1f"><path d="M177.8,266.5 L170.1,266.5 C169.4,264.2 168,262.8 165.8,262.8 C162.6,262.8 160.8,266.3 160.8,271.5 C160.8,276.6 162.8,279.8 165.6,279.8 C166.6,279.8 167.6,279.6 168.4,279.2 L170.8,284.9 C169,285.6 166.6,285.9 163.8,285.9 C156.6,285.9 152.1,280 152.1,271.5 C152.1,263.1 157.4,257.1 165.8,257.1 C172,257.1 176.6,260.5 177.8,266.5 Z"/><path fill-rule="evenodd" stroke="#fff" stroke-width="1.1" paint-order="stroke" d="M177.1,258.8 C179.5,257.7 181.8,257.1 184.6,257.1 C191,257.1 194.9,260.2 194.9,267 L194.9,285.5 L187.8,285.5 L187.3,282.9 C185.5,284.9 182.5,285.9 178.9,285.9 C173.6,285.9 170.1,282.5 170.1,277.5 C170.1,271.4 175.3,268.3 186.8,268 L186.8,266.6 C186.8,264.1 185.5,262.8 183.1,262.8 C181.4,262.8 179.9,263.2 178.5,263.8 Z M186.8,272.2 C180.2,272.5 177.3,274.2 177.3,277.1 C177.3,279.4 178.8,280.8 181.3,280.8 C184.6,280.8 186.8,278.5 186.8,275.4 Z"/></g></svg>
<div class="t" style="left:231.35px;top:241.74px;font-size:25px;font-weight:400;color:#1a1b1f;transform:scaleX(1.0099);transform-origin:1.25px 0;">CA Agile</div>
<div class="t" style="left:230.66px;top:280.82px;font-size:21px;font-weight:400;color:#626a80;transform:scaleX(1.0612);transform-origin:1.94px 0;">Import CA Agile Central tasks as cards</div>
<svg style="left:0;top:0" width="1000" height="400" fill="none" stroke="#1e1f24" stroke-width="2.3" stroke-linecap="round" stroke-linejoin="round"><path d="M849.2,260.6 L858.6,270 M837,269.8 L849.2,282 M841,271 L849.2,263.3 M848.2,278.3 L855.8,269.5 M837,282.5 L842.6,276.9"/></svg>
</div>
<div id="inner"></div>
</body></html>
